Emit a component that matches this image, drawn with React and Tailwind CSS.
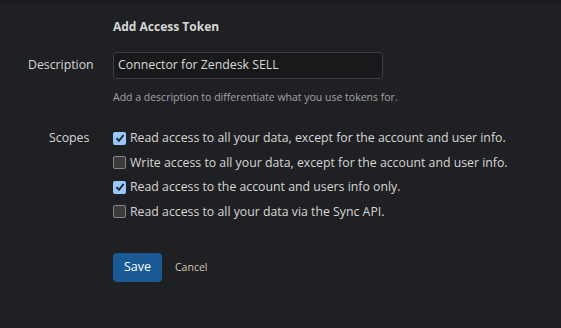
const scopes = [
  { label: "Read access to all your data, except for the account and user info.", checked: true },
  { label: "Write access to all your data, except for the account and user info.", checked: false },
  { label: "Read access to the account and users info only.", checked: true },
  { label: "Read access to all your data via the Sync API.", checked: false },
];

function Box({ checked }) {
  if (checked) {
    return (
      <span className="w-[13px] h-[13px] shrink-0 rounded-[2px] bg-[#99c8ff] grid place-items-center">
        <svg width="10" height="10" viewBox="0 0 10 10" fill="none">
          <path d="M1.5 5.2 L4 7.8 L8.6 2" stroke="#1e1f22" strokeWidth="1.8" />
        </svg>
      </span>
    );
  }
  return <span className="w-[13px] h-[13px] shrink-0 rounded-[2px] bg-[#3b3b3b] border border-[#858585]" />;
}

export default function App() {
  return (
    <div className="w-[561px] h-[328px] bg-[#1f2023] text-[#d6d6d6] text-[12.3px] font-['Open_Sans',sans-serif] border-t-[3px] border-[#1a1b1d] overflow-hidden">
      <div className="pl-[113px] pt-[15px] font-bold text-[12px]">Add Access Token</div>

      <div className="flex items-center mt-[16px]">
        <div className="w-[113px] pl-[28px]">Description</div>
        <div className="w-[270px] h-[27px] rounded-[3px] border border-[#3e3f43] bg-[#18191b] flex items-center px-[4px] text-[#d8d8d8]">
          Connector for Zendesk SELL
        </div>
      </div>
      <div className="pl-[113px] mt-[11px] text-[10.5px] text-[#a3a3a3]">
        Add a description to differentiate what you use tokens for.
      </div>

      <div className="flex mt-[23px]">
        <div className="w-[113px] pl-[49px]">Scopes</div>
        <div className="flex flex-col gap-[5.5px]">
          {scopes.map((s) => (
            <label key={s.label} className="flex items-center gap-[4px] h-[19px]">
              <Box checked={s.checked} />
              <span>{s.label}</span>
            </label>
          ))}
        </div>
      </div>

      <div className="pl-[113px] mt-[32px] flex items-center gap-[13px]">
        <button className="w-[49px] h-[29px] rounded-[4px] bg-[#1a5a94] text-white text-[12.5px]">Save</button>
        <button className="text-[10.5px] text-[#d2c9b8]">Cancel</button>
      </div>
    </div>
  );
}
